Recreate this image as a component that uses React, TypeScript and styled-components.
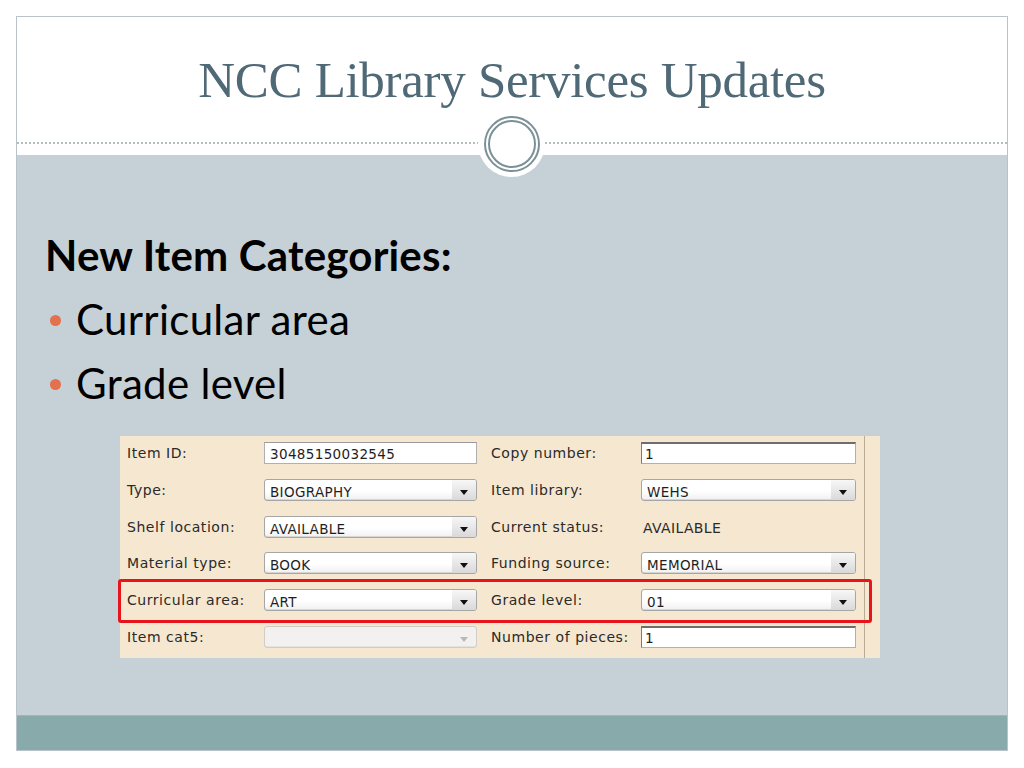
import React from "react";
import styled, { createGlobalStyle } from "styled-components";

const GlobalStyle = createGlobalStyle`
  html, body {
    margin: 0;
    padding: 0;
    background: #ffffff;
  }
  * {
    box-sizing: border-box;
  }
`;

const Slide = styled.div`
  margin: 16px 0 0 16px;
  width: 992px;
  height: 735px;
  border: 1px solid #b9c4c8;
  display: flex;
  flex-direction: column;
  background: #ffffff;
`;

const Header = styled.header`
  padding-top: 38px;
  height: 138px;
  display: flex;
  flex-direction: column;
  align-items: center;
  background: #ffffff;
`;

const Title = styled.h1`
  margin: 0;
  font-family: "Liberation Serif", "DejaVu Serif", serif;
  font-weight: normal;
  font-size: 51px;
  line-height: 1;
  color: #4f6976;
  letter-spacing: -0.3px;
`;

const Rule = styled.div`
  position: relative;
  align-self: stretch;
  margin-top: 36px;
  height: 0;
  border-top: 2px dotted #b3bec2;
`;

const Ornament = styled.div`
  position: absolute;
  left: 50%;
  top: -1px;
  width: 67px;
  height: 67px;
  margin: -33px 0 0 -34px;
  border-radius: 50%;
  background: #ffffff;
  display: flex;
  align-items: center;
  justify-content: center;
  z-index: 2;
`;

const Ring = styled.div<{ size: number }>`
  width: ${({ size }) => size}px;
  height: ${({ size }) => size}px;
  border-radius: 50%;
  border: 2px solid #7b9196;
  display: flex;
  align-items: center;
  justify-content: center;
`;

const Body = styled.main`
  flex: 1;
  background: #c6d1d7;
  padding: 68px 0 0 28px;
  position: relative;
  z-index: 1;
`;

const Heading = styled.div`
  font-family: Lato, "Open Sans", sans-serif;
  font-weight: bold;
  font-size: 42px;
  line-height: 64px;
  letter-spacing: 0.2px;
  color: #000000;
`;

const Bullet = styled.div`
  display: flex;
  align-items: center;
  font-family: Lato, "Open Sans", sans-serif;
  font-size: 42px;
  line-height: 64px;
  letter-spacing: 0.3px;
  color: #000000;
  &::before {
    content: "";
    width: 11px;
    height: 11px;
    border-radius: 50%;
    background: #e2714f;
    margin: 2px 15px 0 5px;
  }
`;

const Panel = styled.div`
  position: relative;
  margin: 21px 0 0 75px;
  width: 760px;
  height: 222px;
  background: #f6e7d0;
  padding-right: 15px;
  display: flex;
`;

const Grid = styled.div`
  flex: 1;
  border-right: 1px solid #b9ab94;
  padding: 6px 0 0 7px;
  display: grid;
  grid-template-columns: 137px 213px 164px 215px;
  row-gap: 14.8px;
  grid-auto-rows: 22px;
  align-items: center;
  & > :nth-child(4n + 3) {
    margin-left: 14px;
  }
`;

const Label = styled.div`
  font-family: "DejaVu Sans", Verdana, sans-serif;
  font-size: 14px;
  letter-spacing: 0.55px;
  color: #2a2a2a;
  white-space: nowrap;
`;

const Value = styled(Label)`
  padding: 3px 0 0 2px;
  letter-spacing: 0.35px;
`;

const TextBox = styled.div<{ inset?: boolean }>`
  height: 22px;
  background: #ffffff;
  border: 1px solid #b0b0b0;
  border-top-color: ${({ inset }) => (inset ? "#6d6d6d" : "#9a9a9a")};
  border-left-color: ${({ inset }) => (inset ? "#7a7a7a" : "#b0b0b0")};
  border-top-width: ${({ inset }) => (inset ? "2px" : "1px")};
  padding: ${({ inset }) => (inset ? "2px 0 0 3px" : "3px 0 0 5px")};
  font-family: "DejaVu Sans", Verdana, sans-serif;
  font-size: 13.5px;
  letter-spacing: 0.35px;
  line-height: 16px;
  color: #1e1e1e;
  white-space: nowrap;
  overflow: hidden;
`;

const SelectBox = styled.div<{ disabled?: boolean }>`
  height: 22px;
  display: flex;
  border: 1px solid ${({ disabled }) => (disabled ? "#d0ccc6" : "#a6a6a6")};
  border-radius: 3px;
  background: ${({ disabled }) =>
    disabled
      ? "#f2f1f0"
      : "linear-gradient(#ffffff 0%, #ffffff 55%, #f0f0f0 100%)"};
  box-shadow: inset 0 -1px 0 ${({ disabled }) => (disabled ? "#e4e2df" : "#d6d6d6")};
  overflow: hidden;
`;

const SelectText = styled.div`
  flex: 1;
  padding: 4px 0 0 5px;
  font-family: "DejaVu Sans", Verdana, sans-serif;
  font-size: 13.5px;
  letter-spacing: 0.35px;
  line-height: 16px;
  color: #1e1e1e;
  white-space: nowrap;
`;

const Arrow = styled.div<{ disabled?: boolean }>`
  width: 24px;
  display: flex;
  align-items: center;
  justify-content: center;
  padding-top: 5px;
  background: ${({ disabled }) =>
    disabled ? "transparent" : "linear-gradient(#f7f7f7, #d9d9d9)"};
  &::after {
    content: "";
    border-left: 4.5px solid transparent;
    border-right: 4.5px solid transparent;
    border-top: 5px solid ${({ disabled }) => (disabled ? "#b8b8b8" : "#111111")};
  }
`;

const Highlight = styled.div`
  position: absolute;
  left: -2px;
  top: 143px;
  width: 754px;
  height: 44px;
  border: 3px solid #e8141b;
  border-radius: 3px;
  pointer-events: none;
`;

const Footer = styled.footer`
  height: 35px;
  background: #89aaaa;
  border-top: 1px solid #9db7b7;
`;

type Field =
  | { kind: "text"; value: string; inset?: boolean }
  | { kind: "select"; value: string; disabled?: boolean }
  | { kind: "plain"; value: string };

const rows: [string, Field, string, Field][] = [
  ["Item ID:", { kind: "text", value: "30485150032545" }, "Copy number:", { kind: "text", value: "1", inset: true }],
  ["Type:", { kind: "select", value: "BIOGRAPHY" }, "Item library:", { kind: "select", value: "WEHS" }],
  ["Shelf location:", { kind: "select", value: "AVAILABLE" }, "Current status:", { kind: "plain", value: "AVAILABLE" }],
  ["Material type:", { kind: "select", value: "BOOK" }, "Funding source:", { kind: "select", value: "MEMORIAL" }],
  ["Curricular area:", { kind: "select", value: "ART" }, "Grade level:", { kind: "select", value: "01" }],
  ["Item cat5:", { kind: "select", value: "", disabled: true }, "Number of pieces:", { kind: "text", value: "1", inset: true }]
];

function renderField(field: Field) {
  switch (field.kind) {
    case "text":
      return <TextBox inset={field.inset}>{field.value}</TextBox>;
    case "select":
      return (
        <SelectBox disabled={field.disabled}>
          <SelectText>{field.value}</SelectText>
          <Arrow disabled={field.disabled} />
        </SelectBox>
      );
    case "plain":
      return <Value>{field.value}</Value>;
  }
}

export default function App() {
  return (
    <>
      <GlobalStyle />
      <Slide>
        <Header>
          <Title>NCC Library Services Updates</Title>
          <Rule>
            <Ornament>
              <Ring size={56}>
                <Ring size={48} />
              </Ring>
            </Ornament>
          </Rule>
        </Header>
        <Body>
          <Heading>New Item Categories:</Heading>
          <Bullet>Curricular area</Bullet>
          <Bullet>Grade level</Bullet>
          <Panel>
            <Grid>
              {rows.map(([l1, f1, l2, f2]) => (
                <React.Fragment key={l1}>
                  <Label>{l1}</Label>
                  {renderField(f1)}
                  <Label>{l2}</Label>
                  {renderField(f2)}
                </React.Fragment>
              ))}
            </Grid>
            <Highlight />
          </Panel>
        </Body>
        <Footer />
      </Slide>
    </>
  );
}
